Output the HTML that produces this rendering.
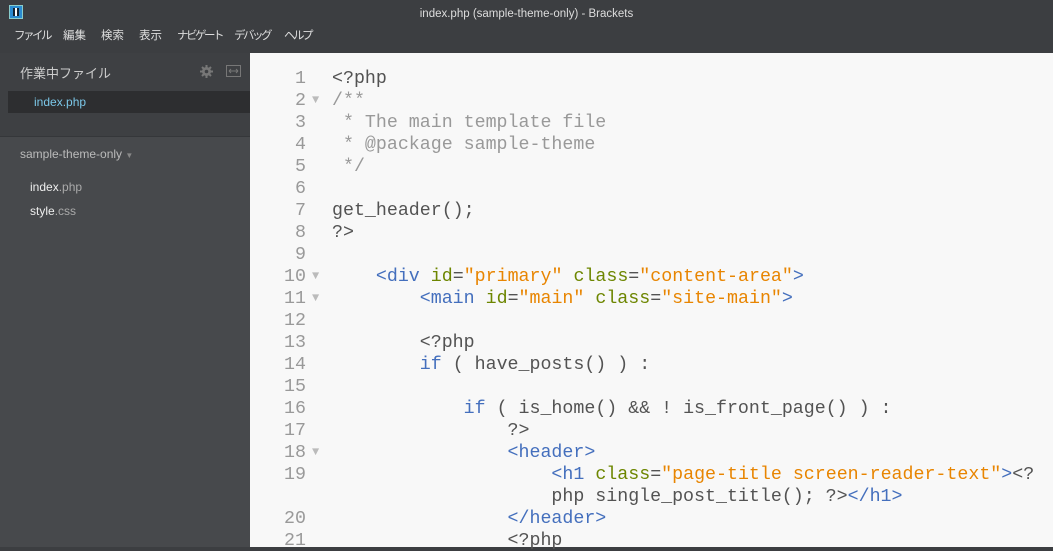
<!DOCTYPE html>
<html><head><meta charset="utf-8"><style>
*{margin:0;padding:0;box-sizing:border-box}
body{width:1053px;height:547px;overflow:hidden;background:#3c3e41;font-family:"Liberation Sans","Noto Sans CJK JP",sans-serif;position:relative}
.top{position:absolute;left:0;top:0;width:1053px;height:53px;background:#3c3e41}
.title{position:absolute;top:8px;left:0;width:1053px;text-align:center;color:#ddd;font-size:11.5px}
.logo{position:absolute;left:9px;top:5px;width:14px;height:14px;background:#2a8bd0;border:1px solid #8cc;}
.logo:after{content:"";position:absolute;left:3px;top:2px;width:6px;height:8px;background:#fff;border-left:2px solid #123;border-right:2px solid #123;box-sizing:border-box}
.m{position:absolute;top:27px;color:#ddd;font-size:11.5px;white-space:nowrap}
.kt{letter-spacing:-2.5px}
.side{position:absolute;left:0;top:53px;width:250px;height:494px;background:#47494c}
.ws{position:absolute;left:0;top:0;width:250px;height:84px;background:#3e4043;border-bottom:1px solid #35373a}
.wsh{position:absolute;left:20px;top:10px;color:#ccc;font-size:13px}
.sel{position:absolute;left:8px;top:38px;width:242px;height:22px;background:#2d2e30;color:#7bc7e8;font-size:12px;padding:4px 0 0 26px}
.proj{position:absolute;left:20px;top:94px;color:#bbb;font-size:12px}
.f{position:absolute;left:30px;color:#eee;font-size:12px}
.f i{font-style:normal;color:#aaa}
.ed{position:absolute;left:250px;top:53px;width:803px;height:494px;background:#f8f8f8;font-family:"Liberation Mono",monospace;font-size:18.3px}
.ln{position:absolute;left:0;width:56px;text-align:right;color:#999}
.fd{position:absolute;left:62px;color:#bbb;font-size:12px}
.c{position:absolute;left:82px;white-space:pre;color:#535353}
.cm{color:#999}.k{color:#446fbd}.t{color:#446fbd}.a{color:#6d8600}.s{color:#e88501}
</style></head><body>
<div class="top"><div class="logo"></div><div class="title">index.php (sample-theme-only) - Brackets</div>
<span class="m kt" style="left:14px">ファイル</span><span class="m" style="left:63px">編集</span><span class="m" style="left:101px">検索</span><span class="m" style="left:139px">表示</span><span class="m kt" style="left:177px">ナビゲート</span><span class="m kt" style="left:234px">デバッグ</span><span class="m kt" style="left:284px">ヘルプ</span></div>
<div class="side">
<div class="ws"><div class="wsh">作業中ファイル</div>
<svg style="position:absolute;left:200px;top:12px" width="13" height="13" viewBox="0 0 13 13"><circle cx="6.5" cy="6.5" r="4.5" fill="#777"/><path d="M6.5 0v13M0 6.5h13M2 2l9 9M11 2l-9 9" stroke="#777" stroke-width="2"/><circle cx="6.5" cy="6.5" r="1.8" fill="#3e4043"/></svg>
<svg style="position:absolute;left:226px;top:12px" width="15" height="12"><rect x="0.5" y="0.5" width="14" height="11" fill="none" stroke="#777"/><path d="M3 6h9M3 6l2-2M3 6l2 2M12 6l-2-2M12 6l-2 2" stroke="#777"/></svg>
<div class="sel">index.php</div></div>
<div class="proj">sample-theme-only <span style="font-size:8px;color:#888">▼</span></div>
<div class="f" style="top:127px">index<i>.php</i></div>
<div class="f" style="top:151px">style<i>.css</i></div>
</div>
<div class="ed" id="ed"></div>
<script>
const L=[
['1','','<span>&lt;?php</span>'],
['2','▼','<span class="cm">/**</span>'],
['3','','<span class="cm"> * The main template file</span>'],
['4','','<span class="cm"> * @package sample-theme</span>'],
['5','','<span class="cm"> */</span>'],
['6','',''],
['7','','get_header();'],
['8','','?&gt;'],
['9','',''],
['10','▼','    <span class="t">&lt;div</span> <span class="a">id</span>=<span class="s">"primary"</span> <span class="a">class</span>=<span class="s">"content-area"</span><span class="t">&gt;</span>'],
['11','▼','        <span class="t">&lt;main</span> <span class="a">id</span>=<span class="s">"main"</span> <span class="a">class</span>=<span class="s">"site-main"</span><span class="t">&gt;</span>'],
['12','',''],
['13','','        &lt;?php'],
['14','','        <span class="k">if</span> ( have_posts() ) :'],
['15','',''],
['16','','            <span class="k">if</span> ( is_home() &amp;&amp; ! is_front_page() ) :'],
['17','','                ?&gt;'],
['18','▼','                <span class="t">&lt;header&gt;</span>'],
['19','','                    <span class="t">&lt;h1</span> <span class="a">class</span>=<span class="s">"page-title screen-reader-text"</span><span class="t">&gt;</span>&lt;?'],
['','','                    php single_post_title(); ?&gt;<span class="t">&lt;/h1&gt;</span>'],
['20','','                <span class="t">&lt;/header&gt;</span>'],
['21','','                &lt;?php']];
let h='';L.forEach((l,i)=>{const y=16+i*22;
h+=`<div class="ln" style="top:${y}px">${l[0]}</div>`;
if(l[1])h+=`<div class="fd" style="top:${y+2}px">${l[1]}</div>`;
h+=`<div class="c" style="top:${y}px">${l[2]}</div>`;});
document.getElementById('ed').innerHTML=h;
</script>
</body></html>
